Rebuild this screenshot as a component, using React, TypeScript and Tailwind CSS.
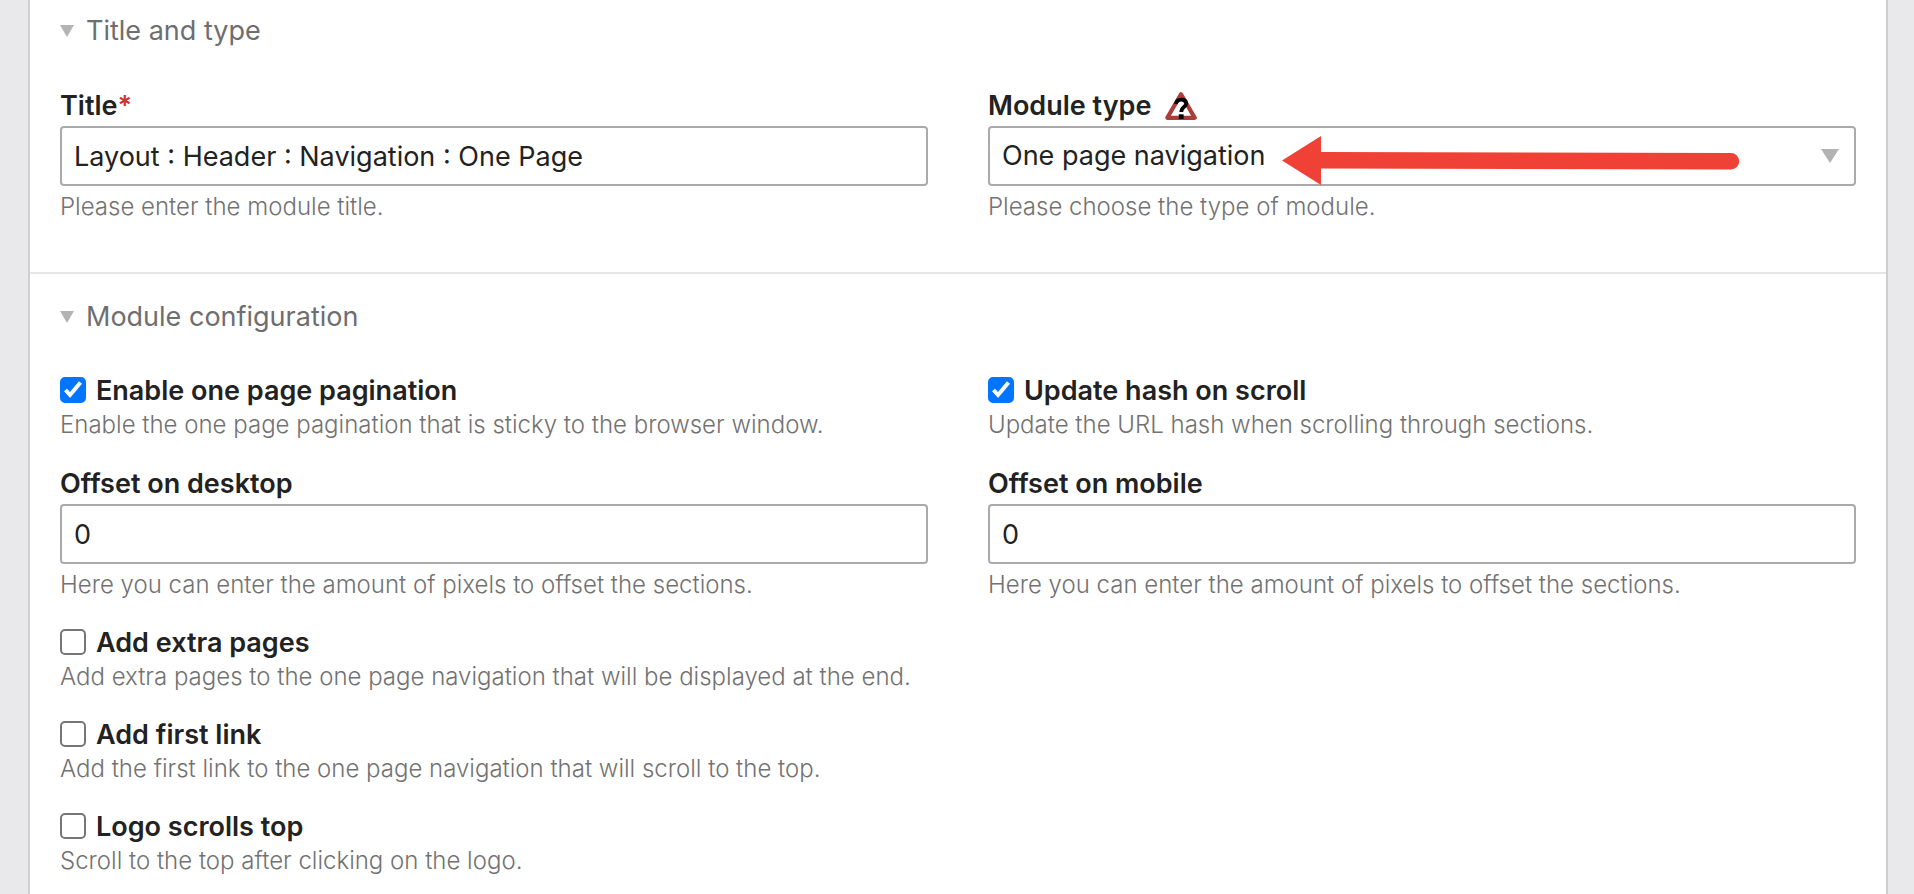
import { useId, useState, type ReactNode } from "react";

function Triangle({ className }: { className: string }) {
  return (
    <svg viewBox="0 0 14 12" preserveAspectRatio="none" className={className} fill="#b3b3b3" aria-hidden="true">
      <path d="M0 0h14L7 12z" />
    </svg>
  );
}

function WarningIcon() {
  return (
    <svg viewBox="0 0 32 28" className="h-7 w-8" fill="none" role="img" aria-label="Help">
      <path d="M16 2.3 29.7 25.8H2.3z" stroke="#ad3d3b" strokeWidth="4.2" strokeLinejoin="round" />
      <path
        d="M11 12C11.300 9 13.500 7.700 16.300 7.700 19.500 7.700 21.200 9.200 21.200 11.500 21.200 15 16.300 15 16.300 20"
        stroke="#000"
        strokeWidth="3.800"
      />
      <path d="M13.800 22.300h4.800V27h-4.800z" fill="#000" />
    </svg>
  );
}

function Arrow() {
  return (
    <svg
      viewBox="0 0 458 50"
      className="pointer-events-none absolute top-[9px] left-[294px] h-[50px] w-[458px]"
      fill="#ef4136"
      aria-hidden="true"
    >
      <path d="M0 25.500 39 1v16l410 1a8 8 0 0 1 0 16.500L39 33.500V50z" />
    </svg>
  );
}

function Section({ title, children }: { title: string; children: ReactNode }) {
  const [open, setOpen] = useState(true);
  return (
    <section className="border-t-2 border-[#e5e5e7] px-[30px] pt-[27px] pb-[49px] first:border-t-0 first:pt-[15px]">
      <h2>
        <button
          type="button"
          aria-expanded={open}
          onClick={() => setOpen(!open)}
          className="flex items-center gap-3 text-[27px] leading-8 font-normal text-[#6e6e70]"
        >
          <Triangle className="h-3 w-3.5" />
          {title}
        </button>
      </h2>
      {open && <div className="mt-[42px] grid grid-cols-2 gap-x-[60px] gap-y-[26px]">{children}</div>}
    </section>
  );
}

function Help({ children }: { children: ReactNode }) {
  return <p className="text-2xl leading-8 font-light text-[#727272]">{children}</p>;
}

const control =
  "block h-[60px] w-full appearance-none rounded-sm border-2 border-[#aaa] bg-white px-3 text-[27px] font-normal text-[#222]";

type FieldProps = {
  label: string;
  help: string;
  value: string;
  required?: boolean;
  options?: boolean;
};

function Field({ label, help, value, required, options }: FieldProps) {
  const id = useId();
  return (
    <div className="pt-px">
      <div className="mb-1 flex items-center gap-3.5">
        <label htmlFor={id} className="text-[27px] leading-8 font-semibold">
          {label}
          {required && <span className="text-[#c33]">*</span>}
        </label>
        {options && <WarningIcon />}
      </div>
      {options ? (
        <div className="relative">
          <select id={id} defaultValue={value} className={control}>
            <option>{value}</option>
          </select>
          <Triangle className="pointer-events-none absolute top-[23px] right-[17px] h-3.5 w-[18px]" />
          <Arrow />
        </div>
      ) : (
        <input id={id} type="text" defaultValue={value} className={control} />
      )}
      <div className="mt-[5px]">
        <Help>{help}</Help>
      </div>
    </div>
  );
}

function Check({ label, help, checked }: { label: string; help: string; checked?: boolean }) {
  const id = useId();
  return (
    <div className="col-start-1 nth-2:col-start-2">
      <div className="flex items-start gap-2.5">
        <span className="relative mt-0.5 flex">
          <input
            id={id}
            type="checkbox"
            defaultChecked={checked}
            className="peer size-[26px] appearance-none rounded-[5px] border-2 border-[#767676] bg-white checked:border-[#0075ff] checked:bg-[#0075ff]"
          />
          <svg
            viewBox="0 0 26 26"
            className="pointer-events-none absolute inset-0 hidden size-[26px] peer-checked:block"
            fill="none"
            stroke="#fff"
            strokeWidth="4"
            aria-hidden="true"
          >
            <path d="M5.500 13 10 18 20.500 5.500" />
          </svg>
        </span>
        <label htmlFor={id} className="text-[27px] leading-8 font-semibold">
          {label}
        </label>
      </div>
      <div className="mt-0.5">
        <Help>{help}</Help>
      </div>
    </div>
  );
}

export default function App() {
  return (
    <div className="min-h-screen bg-[#e9e9eb] pr-[26px] pl-7 font-['Inter','Liberation_Sans',sans-serif] text-[#222]">
      <form className="min-h-screen border-x-2 border-[#cfcfd2] bg-white">
        <Section title="Title and type">
          <Field
            label="Title"
            required
            value="Layout : Header : Navigation : One Page"
            help="Please enter the module title."
          />
          <Field
            label="Module type"
            options
            value="One page navigation"
            help="Please choose the type of module."
          />
        </Section>
        <Section title="Module configuration">
          <Check
            label="Enable one page pagination"
            help="Enable the one page pagination that is sticky to the browser window."
            checked
          />
          <Check
            label="Update hash on scroll"
            help="Update the URL hash when scrolling through sections."
            checked
          />
          <Field
            label="Offset on desktop"
            value="0"
            help="Here you can enter the amount of pixels to offset the sections."
          />
          <Field
            label="Offset on mobile"
            value="0"
            help="Here you can enter the amount of pixels to offset the sections."
          />
          <Check
            label="Add extra pages"
            help="Add extra pages to the one page navigation that will be displayed at the end."
          />
          <Check
            label="Add first link"
            help="Add the first link to the one page navigation that will scroll to the top."
          />
          <Check label="Logo scrolls top" help="Scroll to the top after clicking on the logo." />
        </Section>
      </form>
    </div>
  );
}
